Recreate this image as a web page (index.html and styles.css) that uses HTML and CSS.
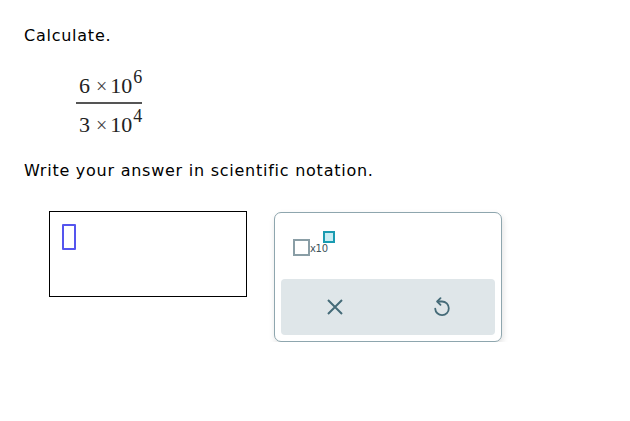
FILE: index.html
```html
<!DOCTYPE html>
<html>
<head>
<meta charset="utf-8">
<link rel="stylesheet" href="styles.css">
</head>
<body>
<div class="page">
  <p class="prompt">Calculate.</p>
  <div class="frac-wrap">
    <div class="frac">
      <div class="num">6<span class="times">×</span>10<sup>6</sup></div>
      <div class="bar"></div>
      <div class="den">3<span class="times">×</span>10<sup>4</sup></div>
    </div>
  </div>
  <p class="prompt instr">Write your answer in scientific notation.</p>
  <div class="answer-row">
    <div class="answer-box"><span class="cursor"></span></div>
    <div class="panel">
      <div class="tools">
        <div class="sci">
          <span class="base"></span><span class="x10">x10</span><span class="exp"></span>
        </div>
      </div>
      <div class="actions">
        <div class="act">
          <svg width="16" height="16" viewBox="0 0 16 16"><path d="M1 1 L15 15 M15 1 L1 15" stroke="#456b78" stroke-width="2" fill="none"/></svg>
        </div>
        <div class="act">
          <svg width="20" height="20" viewBox="0 0 20 20"><path d="M8.5 1.2 L5.2 4.5 L8.5 7.8" stroke="#456b78" stroke-width="1.8" fill="none" stroke-linecap="round" stroke-linejoin="round"/><path d="M5.6 4.5 H10 A6.8 6.8 0 1 1 3.2 11.6" stroke="#456b78" stroke-width="1.8" fill="none" stroke-linecap="round"/></svg>
        </div>
      </div>
    </div>
  </div>
</div>
</body>
</html>
```
FILE: styles.css
```css
html, body {
  margin: 0;
  padding: 0;
  background: #ffffff;
}
.page {
  padding: 26px 0 0 24px;
  font-family: "DejaVu Sans", Verdana, sans-serif;
  font-size: 16px;
  color: #000;
}
.prompt {
  margin: 0;
  line-height: 20px;
  height: 20px;
  letter-spacing: 0.75px;
  white-space: nowrap;
}
.frac-wrap {
  margin: 27px 0 0 52px;
  height: 72px;
}
.frac {
  display: inline-flex;
  flex-direction: column;
  align-items: stretch;
  font-family: "Liberation Serif", "Times New Roman", serif;
  font-size: 22px;
  color: #222;
}
.num, .den {
  line-height: 24px;
  height: 28px;
  padding: 0 0 0 3px;
  white-space: nowrap;
}
.num {
  height: 26px;
  padding-top: 1px;
  height: 25px;
}
.times {
  color: #444;
  margin: 0 3px 0 6px;
  font-size: 20px;
}
sup {
  font-size: 18px;
  position: relative;
  top: -2px;
  margin-left: 1px;
  vertical-align: super;
  line-height: 0;
}
.bar {
  height: 2px;
  background: #555;
  margin: 3px 0 5px 0;
}
.den {
  padding-top: 4px;
}
.instr {
  margin-top: 16px;
}
.answer-row {
  display: flex;
  align-items: flex-start;
  margin: 30px 0 0 25px;
}
.answer-box {
  border: 1px solid #000;
  padding: 12px 0 0 12px;
  box-sizing: border-box;
  width: 198px;
  height: 86px;
}
.cursor {
  display: block;
  width: 14px;
  height: 26px;
  box-sizing: border-box;
  border: 2px solid #5555ee;
  border-radius: 1px;
}
.panel {
  margin: 1px 0 0 27px;
  width: 228px;
  height: 130px;
  box-sizing: border-box;
  border: 1px solid #8ea6ae;
  border-radius: 7px;
  box-shadow: 1px 3px 6px rgba(0,0,0,0.12);
  background: #fff;
  padding: 0 6px 6px 6px;
  display: flex;
  flex-direction: column;
}
.tools {
  height: 66px;
  padding: 18px 0 0 12px;
  box-sizing: border-box;
}
.sci {
  position: relative;
  width: 44px;
  height: 26px;
}
.base {
  position: absolute;
  left: 0;
  top: 8px;
  width: 17px;
  height: 17px;
  box-sizing: border-box;
  border: 2px solid #8a9ea6;
}
.x10 {
  position: absolute;
  left: 17px;
  top: 12px;
  font-family: "DejaVu Sans", Verdana, sans-serif;
  font-size: 10px;
  letter-spacing: -0.3px;
  color: #40525a;
}
.exp {
  position: absolute;
  left: 30px;
  top: 0;
  width: 12px;
  height: 12px;
  box-sizing: border-box;
  border: 2px solid #1a9bb1;
  background: #c9edf3;
}
.actions {
  flex: 1;
  background: #dfe6e9;
  border-radius: 4px;
  display: grid;
  grid-template-columns: 1fr 1fr;
  align-items: center;
  justify-items: center;
}
.act {
  display: flex;
  align-items: center;
  justify-content: center;
}
.act svg {
  display: block;
}
```
